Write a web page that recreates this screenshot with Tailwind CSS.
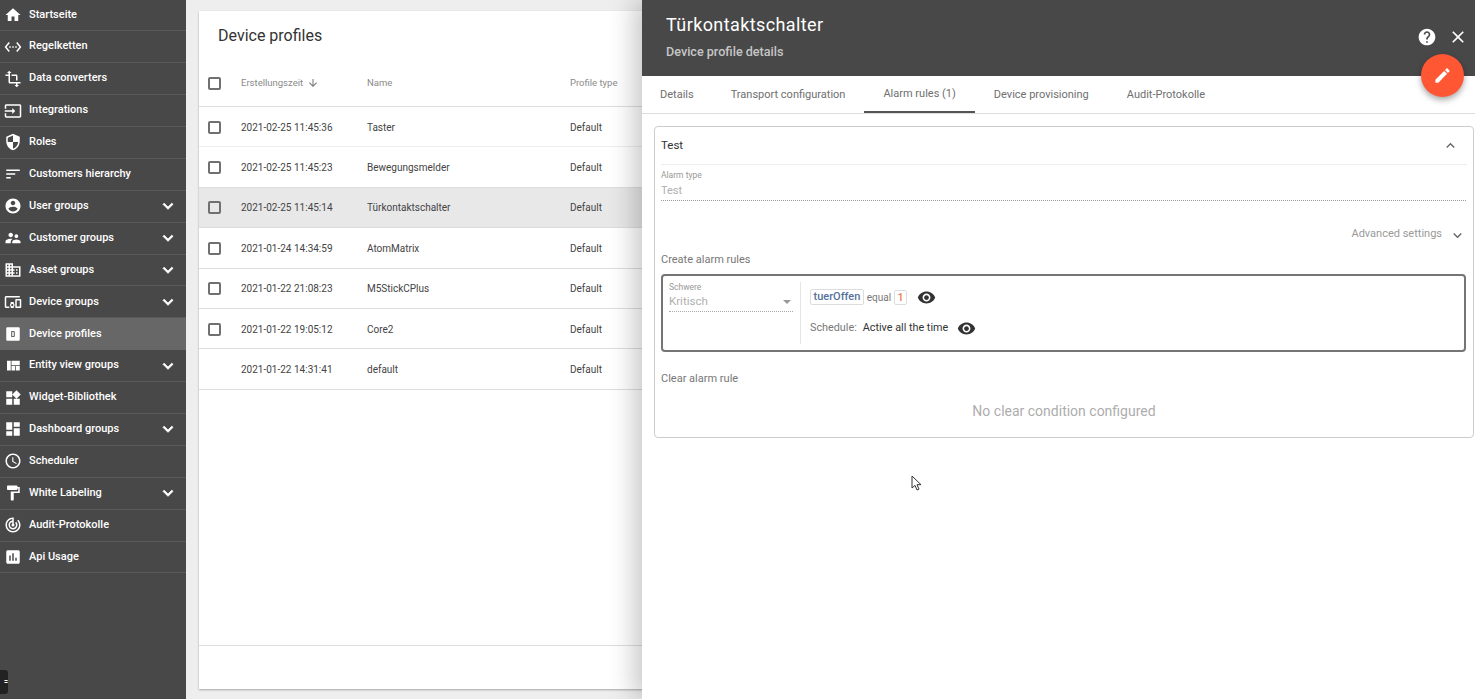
<!DOCTYPE html>
<html lang="en">
<head>
    <meta charset="UTF-8">
    <meta name="viewport" content="width=device-width, initial-scale=1.0">
    <title>Device profiles</title>
    <script src="https://cdn.jsdelivr.net/npm/@tailwindcss/browser@4"></script>
</head>
<body class="bg-[#eeeeef] font-['Roboto',sans-serif] overflow-hidden">
<svg class="hidden">
    <symbol id="chev" viewBox="0 0 24 24"><path d="M16.59 8.59L12 13.17 7.41 8.59 6 10l6 6 6-6z"/></symbol>
    <symbol id="eye" viewBox="0 0 24 24"><path d="M12 4.5C7 4.5 2.73 7.61 1 12c1.73 4.39 6 7.5 11 7.5s9.27-3.11 11-7.5c-1.73-4.39-6-7.5-11-7.5zM12 17c-2.76 0-5-2.24-5-5s2.24-5 5-5 5 2.24 5 5-2.24 5-5 5zm0-8c-1.66 0-3 1.34-3 3s1.34 3 3 3 3-1.34 3-3-1.34-3-3-3z"/></symbol>
</svg>
<div class="relative flex w-[1475px] h-[699px] overflow-hidden">

    <!-- sidebar -->
    <nav class="w-[186px] h-full shrink-0 bg-[#484848] text-white text-[11px] font-medium">
        <div class="-mt-[0.6px]">
            <a class="flex items-center h-[31.9px] border-b border-white/10 pl-[4px] gap-[7px]"><svg class="w-[18px] h-[18px] fill-white" viewBox="0 0 24 24"><path d="M10 20v-6h4v6h5v-8h3L12 3 2 12h3v8z"/></svg>Startseite</a>
            <a class="flex items-center h-[31.9px] border-b border-white/10 pl-[4px] gap-[7px]"><svg class="w-[18px] h-[18px] fill-white" viewBox="0 0 24 24"><path d="M7.77 6.76L6.23 5.48.82 12l5.41 6.52 1.54-1.28L3.42 12l4.35-5.24zM7 13h2v-2H7v2zm10-2h-2v2h2v-2zm-6 2h2v-2h-2v2zm6.77-7.52l-1.54 1.28L20.58 12l-4.35 5.24 1.54 1.28L23.18 12l-5.41-6.52z"/></svg>Regelketten</a>
            <a class="flex items-center h-[31.9px] border-b border-white/10 pl-[4px] gap-[7px]"><svg class="w-[18px] h-[18px] fill-white" viewBox="0 0 24 24"><path d="M22 18v-2H8V4h2L7 1 4 4h2v2H2v2h4v8c0 1.1.9 2 2 2h8v2h-2l3 3 3-3h-2v-2h4zM10 8h6v6h2V8c0-1.1-.9-2-2-2h-6v2z"/></svg>Data converters</a>
            <a class="flex items-center h-[31.9px] border-b border-white/10 pl-[4px] gap-[7px]"><svg class="w-[18px] h-[18px] fill-white" viewBox="0 0 24 24"><path d="M21 3.01H3c-1.1 0-2 .9-2 2V9h2V4.99h18v14.03H3V15H1v4.01c0 1.1.9 1.98 2 1.98h18c1.1 0 2-.88 2-1.98v-14c0-1.11-.9-2-2-2zM11 16l4-4-4-4v3H1v2h10v3z"/></svg>Integrations</a>
            <a class="flex items-center h-[31.9px] border-b border-white/10 pl-[4px] gap-[7px]"><svg class="w-[18px] h-[18px] fill-white" viewBox="0 0 24 24"><path d="M12 1L3 5v6c0 5.55 3.84 10.74 9 12 5.16-1.26 9-6.45 9-12V5l-9-4zm0 10.99h7c-.53 4.12-3.28 7.79-7 8.94V12H5V6.3l7-3.11v8.8z"/></svg>Roles</a>
            <a class="flex items-center h-[31.9px] border-b border-white/10 pl-[4px] gap-[7px]"><svg class="w-[18px] h-[18px] fill-white" viewBox="0 0 24 24"><path d="M3 18h6v-2H3v2zM3 6v2h18V6H3zm0 7h12v-2H3v2z"/></svg>Customers hierarchy</a>
            <a class="flex items-center h-[31.9px] border-b border-white/10 pl-[4px] gap-[7px]"><svg class="w-[18px] h-[18px] fill-white" viewBox="0 0 24 24"><path d="M12 2C6.48 2 2 6.48 2 12s4.48 10 10 10 10-4.48 10-10S17.52 2 12 2zm0 3c1.66 0 3 1.34 3 3s-1.34 3-3 3-3-1.34-3-3 1.34-3 3-3zm0 14.2c-2.5 0-4.71-1.28-6-3.22.03-1.99 4-3.08 6-3.08 1.99 0 5.97 1.09 6 3.08-1.29 1.94-3.5 3.22-6 3.22z"/></svg>User groups<svg class="w-[20px] h-[20px] fill-white stroke-white stroke-[1px] ml-auto mr-[8px]"><use href="#chev"/></svg></a>
            <a class="flex items-center h-[31.9px] border-b border-white/10 pl-[4px] gap-[7px]"><svg class="w-[18px] h-[18px] fill-white" viewBox="0 0 24 24"><path d="M16.5 12c1.38 0 2.49-1.12 2.49-2.5S17.88 7 16.5 7C15.12 7 14 8.12 14 9.5s1.12 2.5 2.5 2.5zM9 11c1.66 0 2.99-1.34 2.99-3S10.66 5 9 5C7.34 5 6 6.34 6 8s1.34 3 3 3zm7.5 3c-1.83 0-5.5.92-5.5 2.75V19h11v-2.25c0-1.83-3.67-2.75-5.5-2.75zM9 13c-2.33 0-7 1.17-7 3.5V19h7v-2.25c0-.85.33-2.34 2.37-3.47C10.5 13.1 9.66 13 9 13z"/></svg>Customer groups<svg class="w-[20px] h-[20px] fill-white stroke-white stroke-[1px] ml-auto mr-[8px]"><use href="#chev"/></svg></a>
            <a class="flex items-center h-[31.9px] border-b border-white/10 pl-[4px] gap-[7px]"><svg class="w-[18px] h-[18px] fill-white" viewBox="0 0 24 24"><path d="M12 7V3H2v18h20V7H12zM6 19H4v-2h2v2zm0-4H4v-2h2v2zm0-4H4V9h2v2zm0-4H4V5h2v2zm4 12H8v-2h2v2zm0-4H8v-2h2v2zm0-4H8V9h2v2zm0-4H8V5h2v2zm10 12h-8v-2h2v-2h-2v-2h2v-2h-2V9h8v10zm-2-8h-2v2h2v-2zm0 4h-2v2h2v-2z"/></svg>Asset groups<svg class="w-[20px] h-[20px] fill-white stroke-white stroke-[1px] ml-auto mr-[8px]"><use href="#chev"/></svg></a>
            <a class="flex items-center h-[31.9px] border-b border-white/10 pl-[4px] gap-[7px]"><svg class="w-[18px] h-[18px] fill-white" viewBox="0 0 24 24"><path d="M3 6h18V4H3c-1.1 0-2 .9-2 2v12c0 1.1.9 2 2 2h4v-2H3V6zm10 6H9v1.78c-.61.55-1 1.33-1 2.22s.39 1.67 1 2.22V20h4v-1.78c.61-.55 1-1.34 1-2.22s-.39-1.67-1-2.22V12zm-2 5.5c-.83 0-1.5-.67-1.5-1.5s.67-1.5 1.5-1.5 1.5.67 1.5 1.5-.67 1.5-1.5 1.5zM22 8h-6c-.5 0-1 .5-1 1v10c0 .5.5 1 1 1h6c.5 0 1-.5 1-1V9c0-.5-.5-1-1-1zm-1 10h-4v-8h4v8z"/></svg>Device groups<svg class="w-[20px] h-[20px] fill-white stroke-white stroke-[1px] ml-auto mr-[8px]"><use href="#chev"/></svg></a>
            <a class="flex items-center h-[31.9px] bg-[#676767] pl-[4px] gap-[7px]"><svg class="w-[18px] h-[18px] fill-white" viewBox="0 0 24 24"><path fill-rule="evenodd" d="M4.5 3h15A1.5 1.5 0 0 1 21 4.5v15a1.5 1.5 0 0 1-1.5 1.5h-15A1.5 1.5 0 0 1 3 19.5v-15A1.5 1.5 0 0 1 4.5 3zM9.5 8v8H13a1.5 1.5 0 0 0 1.5-1.5v-5A1.5 1.5 0 0 0 13 8zm1.5 1.4h1.6a.4.4 0 0 1 .4.4v4.4a.4.4 0 0 1-.4.4H11z"/></svg>Device profiles</a>
            <a class="flex items-center h-[31.9px] border-b border-white/10 pl-[4px] gap-[7px]"><svg class="w-[18px] h-[18px] fill-white" viewBox="0 0 24 24"><path d="M10 18h5v-6h-5v6zm-6 0h5V5H4v13zm12 0h5v-6h-5v6zM10 5v6h11V5H10z"/></svg>Entity view groups<svg class="w-[20px] h-[20px] fill-white stroke-white stroke-[1px] ml-auto mr-[8px]"><use href="#chev"/></svg></a>
            <a class="flex items-center h-[31.9px] border-b border-white/10 pl-[4px] gap-[7px]"><svg class="w-[18px] h-[18px] fill-white" viewBox="0 0 24 24"><path d="M13 13v8h8v-8h-8zM3 21h8v-8H3v8zM3 3v8h8V3H3zm13.66-1.31L11 7.34 16.66 13l5.66-5.66-5.66-5.65z"/></svg>Widget-Bibliothek</a>
            <a class="flex items-center h-[31.9px] border-b border-white/10 pl-[4px] gap-[7px]"><svg class="w-[18px] h-[18px] fill-white" viewBox="0 0 24 24"><path d="M3 13h8V3H3v10zm0 8h8v-6H3v6zm10 0h8V11h-8v10zm0-18v6h8V3h-8z"/></svg>Dashboard groups<svg class="w-[20px] h-[20px] fill-white stroke-white stroke-[1px] ml-auto mr-[8px]"><use href="#chev"/></svg></a>
            <a class="flex items-center h-[31.9px] border-b border-white/10 pl-[4px] gap-[7px]"><svg class="w-[18px] h-[18px] fill-white" viewBox="0 0 24 24"><path d="M11.99 2C6.47 2 2 6.48 2 12s4.47 10 9.99 10C17.52 22 22 17.52 22 12S17.52 2 11.99 2zM12 20c-4.42 0-8-3.58-8-8s3.58-8 8-8 8 3.58 8 8-3.58 8-8 8zm.5-13H11v6l5.25 3.15.75-1.23-4.5-2.67z"/></svg>Scheduler</a>
            <a class="flex items-center h-[31.9px] border-b border-white/10 pl-[4px] gap-[7px]"><svg class="w-[18px] h-[18px] fill-white" viewBox="0 0 24 24"><path d="M18 4V3c0-.55-.45-1-1-1H5c-.55 0-1 .45-1 1v4c0 .55.45 1 1 1h12c.55 0 1-.45 1-1V6h1v4H9v11c0 .55.45 1 1 1h2c.55 0 1-.45 1-1v-9h8V4h-3z"/></svg>White Labeling<svg class="w-[20px] h-[20px] fill-white stroke-white stroke-[1px] ml-auto mr-[8px]"><use href="#chev"/></svg></a>
            <a class="flex items-center h-[31.9px] border-b border-white/10 pl-[4px] gap-[7px]"><svg class="w-[18px] h-[18px] fill-white" viewBox="0 0 24 24"><path d="M19.07 4.93l-1.41 1.41C19.1 7.79 20 9.79 20 12c0 4.42-3.58 8-8 8s-8-3.58-8-8c0-4.08 3.05-7.44 7-7.93v2.02C8.16 6.57 6 9.03 6 12c0 3.31 2.69 6 6 6s6-2.69 6-6c0-1.66-.67-3.16-1.76-4.24l-1.41 1.41C15.55 9.9 16 10.9 16 12c0 2.21-1.79 4-4 4s-4-1.79-4-4c0-1.86 1.28-3.41 3-3.86v2.14c-.6.35-1 .98-1 1.72 0 1.1.9 2 2 2s2-.9 2-2c0-.74-.4-1.38-1-1.72V2h-1C6.48 2 2 6.48 2 12s4.48 10 10 10 10-4.48 10-10c0-2.76-1.12-5.26-2.93-7.07z"/></svg>Audit-Protokolle</a>
            <a class="flex items-center h-[31.9px] border-b border-white/10 pl-[4px] gap-[7px]"><svg class="w-[18px] h-[18px] fill-white" viewBox="0 0 24 24"><path d="M19 3H5c-1.1 0-2 .9-2 2v14c0 1.1.9 2 2 2h14c1.1 0 2-.9 2-2V5c0-1.1-.9-2-2-2zM9 17H7v-7h2v7zm4 0h-2V7h2v10zm4 0h-2v-4h2v4z"/></svg>Api Usage</a>
        </div>
    </nav>

    <!-- device profile table -->
    <main class="flex-1 pl-[13px] pt-[11px] pb-[10px]">
        <div class="h-full bg-white shadow-[0_1px_2px_rgba(0,0,0,0.3)] flex flex-col text-[10px] text-[#444]">
            <h1 class="pl-[19px] pt-[15px] h-[48px] text-[16px] leading-[20px] text-[#333]">Device profiles</h1>
            <div class="flex items-center h-[48px] pt-[1px] border-b border-[#ddd] text-[#8a8a8a] text-[9.5px]">
                <span class="ml-[9px] w-[13px] h-[13px] border-2 border-[#707070] rounded-[2px]"></span>
                <span class="ml-[20px] w-[126px] flex items-center gap-[4px]">Erstellungszeit <svg class="w-[12px] h-[12px] fill-[#777]" viewBox="0 0 24 24"><path d="M20 12l-1.41-1.41L13 16.17V4h-2v12.17l-5.58-5.59L4 12l8 8 8-8z"/></svg></span>
                <span class="w-[203px]">Name</span>
                <span>Profile type</span>
            </div>
            <div class="flex items-center h-[40.4px] pt-[1px] border-b border-[#eee]">
                <span class="ml-[9px] w-[13px] h-[13px] border-2 border-[#707070] rounded-[2px]"></span>
                <span class="ml-[20px] w-[126px]">2021-02-25 11:45:36</span><span class="w-[203px]">Taster</span><span>Default</span>
            </div>
            <div class="flex items-center h-[40.4px] pt-[1px] border-b border-[#ddd]">
                <span class="ml-[9px] w-[13px] h-[13px] border-2 border-[#707070] rounded-[2px]"></span>
                <span class="ml-[20px] w-[126px]">2021-02-25 11:45:23</span><span class="w-[203px]">Bewegungsmelder</span><span>Default</span>
            </div>
            <div class="flex items-center h-[40.4px] pt-[1px] border-b border-[#ddd] bg-[#e8e8e9]">
                <span class="ml-[9px] w-[13px] h-[13px] border-2 border-[#707070] rounded-[2px]"></span>
                <span class="ml-[20px] w-[126px]">2021-02-25 11:45:14</span><span class="w-[203px]">Türkontaktschalter</span><span>Default</span>
            </div>
            <div class="flex items-center h-[40.4px] pt-[1px] border-b border-[#ddd]">
                <span class="ml-[9px] w-[13px] h-[13px] border-2 border-[#707070] rounded-[2px]"></span>
                <span class="ml-[20px] w-[126px]">2021-01-24 14:34:59</span><span class="w-[203px]">AtomMatrix</span><span>Default</span>
            </div>
            <div class="flex items-center h-[40.4px] pt-[1px] border-b border-[#ddd]">
                <span class="ml-[9px] w-[13px] h-[13px] border-2 border-[#707070] rounded-[2px]"></span>
                <span class="ml-[20px] w-[126px]">2021-01-22 21:08:23</span><span class="w-[203px]">M5StickCPlus</span><span>Default</span>
            </div>
            <div class="flex items-center h-[40.4px] pt-[1px] border-b border-[#ddd]">
                <span class="ml-[9px] w-[13px] h-[13px] border-2 border-[#707070] rounded-[2px]"></span>
                <span class="ml-[20px] w-[126px]">2021-01-22 19:05:12</span><span class="w-[203px]">Core2</span><span>Default</span>
            </div>
            <div class="flex items-center h-[40.4px] pt-[1px] border-b border-[#ddd]">
                <span class="ml-[42px] w-[126px]">2021-01-22 14:31:41</span><span class="w-[203px]">default</span><span>Default</span>
            </div>
            <div class="mt-auto h-[44px] border-t border-[#ddd]"></div>
        </div>
    </main>

    <!-- details panel, slides over the table -->
    <aside class="absolute top-0 right-0 w-[833px] h-full bg-white flex flex-col shadow-[-8px_0_24px_rgba(0,0,0,0.22)]">
        <header class="relative h-[76px] shrink-0 bg-[#484848] pl-[24px] pt-[14px] text-white">
            <h2 class="text-[18px] leading-[22px] tracking-[0.4px]">Türkontaktschalter</h2>
            <p class="mt-[8px] text-[12.6px] leading-[16px] font-medium text-white/70">Device profile details</p>
            <div class="absolute right-[7px] top-[27px] flex items-center gap-[11px]">
                <svg class="w-[20px] h-[20px] fill-white" viewBox="0 0 24 24"><path d="M12 2C6.48 2 2 6.48 2 12s4.48 10 10 10 10-4.48 10-10S17.52 2 12 2zm1 17h-2v-2h2v2zm2.07-7.75l-.9.92C13.45 12.9 13 13.5 13 15h-2v-.5c0-1.1.45-2.1 1.17-2.83l1.24-1.26c.37-.36.59-.86.59-1.41 0-1.1-.9-2-2-2s-2 .9-2 2H8c0-2.21 1.79-4 4-4s4 1.79 4 4c0 .88-.36 1.68-.93 2.25z"/></svg>
                <svg class="w-[20px] h-[20px] fill-white" viewBox="0 0 24 24"><path d="M19 6.41L17.59 5 12 10.59 6.41 5 5 6.41 10.59 12 5 17.59 6.41 19 12 13.41 17.59 19 19 17.59 13.41 12z"/></svg>
            </div>
        </header>
        <button class="absolute left-[779px] top-[54px] w-[43px] h-[43px] rounded-full bg-[#ff5733] shadow-[0_3px_6px_rgba(0,0,0,0.35)] flex items-center justify-center z-10">
            <svg class="w-[19px] h-[19px] fill-white" viewBox="0 0 24 24"><path d="M3 17.25V21h3.75L17.81 9.94l-3.75-3.75L3 17.25zM20.71 7.04c.39-.39.39-1.02 0-1.41l-2.34-2.34c-.39-.39-1.02-.39-1.41 0l-1.83 1.83 3.75 3.75 1.83-1.83z"/></svg>
        </button>

        <div class="flex h-[38px] shrink-0 border-b border-[#ddd] text-[11px] text-[#6f6f6f]">
            <span class="h-full px-[18px] pt-[2px] flex items-center">Details</span>
            <span class="h-full px-[19px] pt-[2px] flex items-center">Transport configuration</span>
            <span class="h-full px-[19px] pt-[2px] flex items-center border-b-2 border-[#555]">Alarm rules (1)</span>
            <span class="h-full px-[19px] pt-[2px] flex items-center">Device provisioning</span>
            <span class="h-full px-[19px] pt-[2px] flex items-center">Audit-Protokolle</span>
        </div>

        <section class="mt-[12px] ml-[12px] mr-[1px] h-[312px] border border-[#ccc] rounded-[4px] px-[6px] text-[11px]">
            <div class="h-[38px] flex items-center justify-between border-b border-[#eee] text-[11.5px] text-[#333] pr-[8px]">
                Test
                <svg class="w-[17px] h-[17px] fill-[#666]" viewBox="0 0 24 24"><path d="M12 8l-6 6 1.41 1.41L12 10.83l4.59 4.58L18 14z"/></svg>
            </div>
            <div class="h-[36px] border-b border-dotted border-[#999] mr-[1px]">
                <div class="pt-[5px] text-[8.5px] leading-[10px] text-[#999]">Alarm type</div>
                <div class="mt-[4px] text-[11px] leading-[14px] text-[#b0b0b0]">Test</div>
            </div>
            <div class="mt-[24px] h-[18px] flex items-center justify-end gap-[7px] pr-[1px] text-[#999]">
                Advanced settings
                <svg class="w-[17px] h-[17px] fill-[#666] mt-[3px]" viewBox="0 0 24 24"><use href="#chev"/></svg>
            </div>
            <div class="mt-[9px] leading-[16px] text-[#777]">Create alarm rules</div>
            <div class="mt-[6px] mr-[1px] h-[78px] border-2 border-[#757575] rounded-[4px] flex py-[6px]">
                <div class="w-[138px] pl-[6px] pr-[7px] border-r border-[#e5e5e5]">
                    <div class="text-[8.5px] leading-[10px] text-[#999]">Schwere</div>
                    <div class="h-[20px] flex items-center justify-between border-b border-dotted border-[#aaa] text-[11.5px] text-[#b0b0b0]">
                        Kritisch
                        <span class="mr-[2px] border-x-[4px] border-t-[4px] border-x-transparent border-t-[#999]"></span>
                    </div>
                </div>
                <div class="pl-[9px] pt-[7px]">
                    <div class="flex items-center h-[16px] text-[10px]">
                        <span class="px-[2.5px] h-[16px] flex items-center border border-[#ddd] rounded-[2px] text-[#56729c] font-medium text-[11px]">tuerOffen</span>
                        <span class="ml-[3px] text-[#777]">equal</span>
                        <span class="ml-[3px] w-[13px] h-[15px] flex items-center justify-center border border-[#ddd] rounded-[2px] text-[#e8763f] font-medium">1</span>
                        <svg class="ml-[10px] w-[19px] h-[19px] fill-[#333]"><use href="#eye"/></svg>
                    </div>
                    <div class="mt-[15px] flex items-center h-[16px] text-[10.8px]">
                        <span class="text-[#777]">Schedule:</span>
                        <span class="ml-[6px] text-[#333]">Active all the time</span>
                        <svg class="ml-[9px] w-[19px] h-[19px] fill-[#333]"><use href="#eye"/></svg>
                    </div>
                </div>
            </div>
            <div class="mt-[19px] leading-[16px] text-[#777]">Clear alarm rule</div>
            <div class="mt-[15px] text-center text-[14px] leading-[18px] text-[#adadad]">No clear condition configured</div>
        </section>
    </aside>

    <!-- mouse pointer -->
    <svg class="absolute left-[911px] top-[475px] w-[11px] h-[16px]" viewBox="0 0 11 16"><path d="M1 1v12l3-2.6L6 15l2-.9-2-4.4h4z" fill="#fff" stroke="#333" stroke-width="1"/></svg>

    <!-- cut off badge in the corner -->
    <div class="absolute left-0 top-[670px] w-[8px] h-[24px] bg-[#222] rounded-r-[3px] flex items-center justify-end text-white text-[7px] font-bold overflow-hidden">=</div>
</div>
</body>
</html>
